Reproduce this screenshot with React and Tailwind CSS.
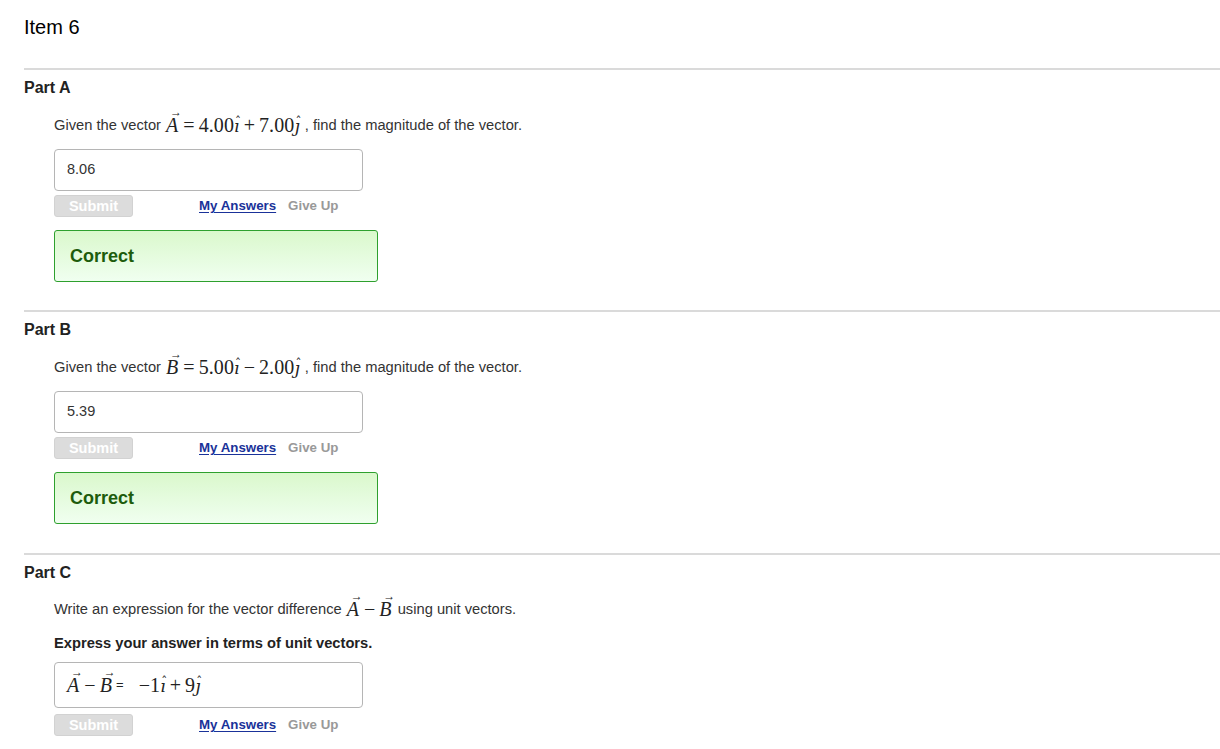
const serif = { fontFamily: '"Liberation Serif", "DejaVu Serif", serif' }
const dejavu = { fontFamily: '"DejaVu Serif", serif' }

function Vec({ children }) {
  return (
    <span className="relative inline-block italic pr-[1px]">
      {children}
      <span className="absolute left-[4px] right-0 top-[-4px] text-center text-[12px] not-italic leading-none">→</span>
    </span>
  )
}

function Hat({ children }) {
  return (
    <span className="relative inline-block italic text-[17px]" style={dejavu}>
      {children}
      <span className="absolute left-[1px] right-0 top-[2px] text-center text-[12px] not-italic leading-none">ˆ</span>
    </span>
  )
}

function Op({ children }) {
  return <span className="mx-[4px]">{children}</span>
}

function Math({ children }) {
  return (
    <span className="text-[20px] text-[#222] mx-[5px] tracking-[0.1px]" style={serif}>
      {children}
    </span>
  )
}

function Controls() {
  return (
    <div className="flex items-center h-[22px]">
      <button className="w-[79px] h-[22px] rounded-[3px] bg-[#dcdcdc] border border-[#d2d2d2] text-white font-bold text-[14.5px] leading-none">
        Submit
      </button>
      <a href="#" className="ml-[66px] text-[13.3px] font-bold text-[#1a3299] underline underline-offset-2">My Answers</a>
      <span className="ml-3 text-[13.3px] font-bold text-[#999]">Give Up</span>
    </div>
  )
}

function Correct() {
  return (
    <div className="mt-[13px] w-[324px] h-[52px] rounded-[3px] border-[1.5px] border-[#2ea02e] bg-gradient-to-b from-[#daf8cc] to-[#f0fff0] flex items-center pl-[15px]">
      <span className="text-[18px] font-bold text-[#1d5c0c]">Correct</span>
    </div>
  )
}

function Part({ label, children }) {
  return (
    <div className="border-t-2 border-[#dadada]">
      <div className="pt-[8px] h-[28px] text-[16px] font-bold text-[#222] leading-[20px]">{label}</div>
      <div className="pl-[30px]">{children}</div>
    </div>
  )
}

export default function App() {
  return (
    <div className="w-[1220px] h-[749px] overflow-hidden bg-white pl-6 text-[#333]" style={{ fontFamily: '"Liberation Sans", Arial, sans-serif' }}>
      <div className="pt-[13px] h-[68px] text-[20px] leading-[28px] text-black">Item 6</div>

      <Part label="Part A">
        <div className="mt-[15px] h-[24px] flex items-center text-[14.7px] text-[#333]">
          <span>Given the vector</span>
          <Math>
            <Vec>A</Vec><Op>=</Op>4.00<Hat>ı</Hat><Op>+</Op>7.00<Hat>ȷ</Hat>
          </Math>
          <span>, find the magnitude of the vector.</span>
        </div>
        <div className="mt-[12px] w-[309px] h-[42px] rounded-[4px] border border-[#b5b5b5] flex items-center pl-3 text-[14.5px] text-[#333]">8.06</div>
        <div className="mt-1">
          <Controls />
        </div>
        <Correct />
        <div className="h-[28px]" />
      </Part>

      <Part label="Part B">
        <div className="mt-[15px] h-[24px] flex items-center text-[14.7px] text-[#333]">
          <span>Given the vector</span>
          <Math>
            <Vec>B</Vec><Op>=</Op>5.00<Hat>ı</Hat><Op>−</Op>2.00<Hat>ȷ</Hat>
          </Math>
          <span>, find the magnitude of the vector.</span>
        </div>
        <div className="mt-[12px] w-[309px] h-[42px] rounded-[4px] border border-[#b5b5b5] flex items-center pl-3 text-[14.5px] text-[#333]">5.39</div>
        <div className="mt-1">
          <Controls />
        </div>
        <Correct />
        <div className="h-[29px]" />
      </Part>

      <Part label="Part C">
        <div className="mt-[13px] h-[26px] flex items-center text-[14.7px] text-[#333]">
          <span>Write an expression for the vector difference</span>
          <Math>
            <Vec>A</Vec><Op>−</Op><Vec>B</Vec>
          </Math>
          <span>using unit vectors.</span>
        </div>
        <div className="mt-[11px] h-[20px] text-[14.7px] font-bold text-[#222] leading-[20px]">Express your answer in terms of unit vectors.</div>
        <div className="mt-[9px] w-[309px] h-[46px] rounded-[4px] border border-[#b5b5b5] flex items-center pl-3 text-[#222]">
          <span className="text-[20px] tracking-[0.1px]" style={serif}>
            <Vec>A</Vec><Op>−</Op><Vec>B</Vec>
          </span>
          <span className="text-[13px] ml-[3px] mr-[15px]">=</span>
          <span className="text-[20px] tracking-[0.1px]" style={serif}>
            −1<Hat>ı</Hat><Op>+</Op>9<Hat>ȷ</Hat>
          </span>
        </div>
        <div className="mt-[6px]">
          <Controls />
        </div>
        <Correct />
      </Part>
    </div>
  )
}
